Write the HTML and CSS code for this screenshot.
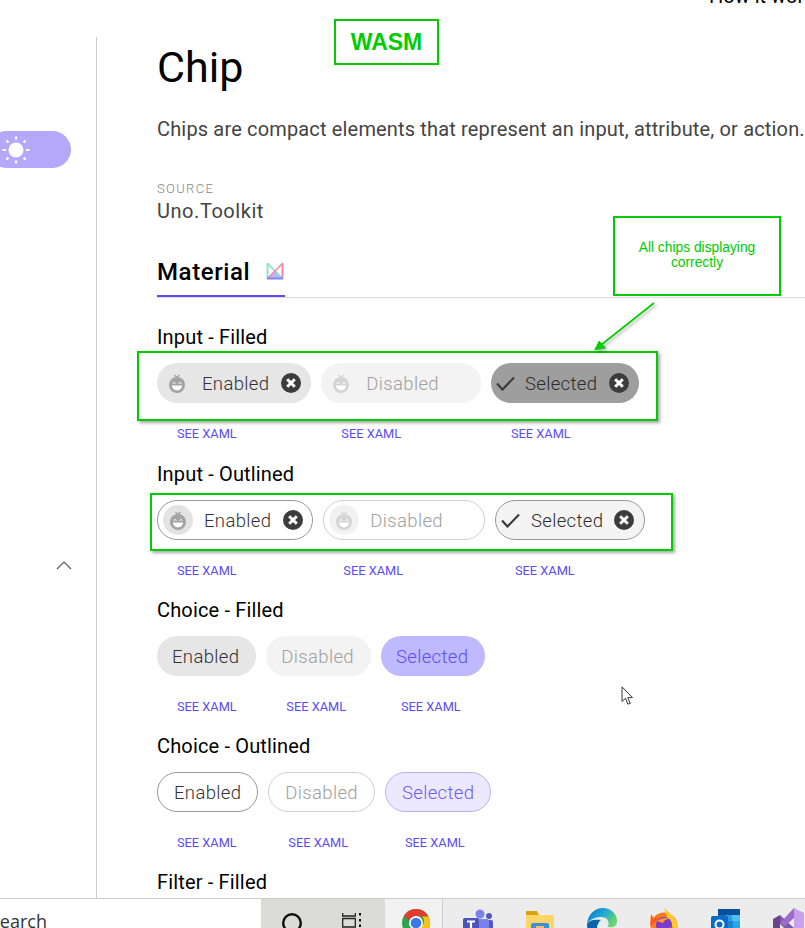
FILE: index.html
```html
<!DOCTYPE html>
<html lang="en">
<head>
<meta charset="utf-8">
<title>Chip</title>
<link rel="stylesheet" href="styles.css">
</head>
<body>
<div class="page">
  <header class="topbar"><span class="topbar-link">How it works</span></header>
  <div class="layout">
    <aside class="sidebar">
      <div class="theme-toggle">
        <svg class="sun" viewBox="0 0 30 30" width="30" height="30"><circle cx="15" cy="15" r="7.500" fill="#fff"/><g stroke="#fff" stroke-width="2.200"><path d="M15 1.500v3M15 25.500v3M1.500 15h3.500M25 15h3.500M5.500 5.500l2 2M22.500 22.500l2 2M5.500 24.500l2-2M22.500 7.500l2-2"/></g></svg>
      </div>
      <svg class="chevron" viewBox="0 0 16 9" width="16" height="9"><path d="M1 8l7-7 7 7" fill="none" stroke="#555" stroke-width="1.100"/></svg>
    </aside>
    <main class="main">
      <h1 class="title">Chip</h1>
      <p class="desc">Chips are compact elements that represent an input, attribute, or action.</p>
      <div class="source-label">SOURCE</div>
      <div class="source-value">Uno.Toolkit</div>
      <div class="tabs">
        <div class="tab">
          <span class="tab-text">Material</span>
          <svg class="tab-icon" viewBox="0 0 18 18" width="18" height="18"><g opacity=".8"><path d="M9 9L16.500 16.500H1.500Z" fill="#a9a4f7"/><path d="M1.500 1V17" stroke="#6fe0b0" stroke-width="2"/><path d="M1.500 1.500L16.500 16.500" stroke="#62d9b5" stroke-width="1.600" fill="none"/><path d="M16.500 1V17" stroke="#f2688f" stroke-width="2"/><path d="M16.500 1.500L1.500 16.500" stroke="#f2688f" stroke-width="1.600" fill="none"/><path d="M1 16.500H17" stroke="#6c63f0" stroke-width="2"/></g></svg>
        </div>
      </div>

      <section class="section">
        <h2 class="heading">Input - Filled</h2>
        <div class="row">
          <div class="cell"><div class="chip input filled"><svg class="face"><use href="#face"/></svg><span class="label">Enabled</span><svg class="close"><use href="#close"/></svg></div><a class="xaml">SEE XAML</a></div>
          <div class="cell"><div class="chip input filled disabled"><svg class="face"><use href="#face"/></svg><span class="label">Disabled</span><span class="close-space"></span></div><a class="xaml">SEE XAML</a></div>
          <div class="cell"><div class="chip input filled selected"><svg class="check"><use href="#check"/></svg><span class="label">Selected</span><svg class="close"><use href="#close"/></svg></div><a class="xaml">SEE XAML</a></div>
        </div>
      </section>

      <section class="section">
        <h2 class="heading">Input - Outlined</h2>
        <div class="row">
          <div class="cell"><div class="chip input outlined"><span class="avatar"><svg class="face"><use href="#face"/></svg></span><span class="label">Enabled</span><svg class="close"><use href="#close"/></svg></div><a class="xaml">SEE XAML</a></div>
          <div class="cell"><div class="chip input outlined disabled"><span class="avatar"><svg class="face"><use href="#face"/></svg></span><span class="label">Disabled</span><span class="close-space"></span></div><a class="xaml">SEE XAML</a></div>
          <div class="cell"><div class="chip input outlined selected"><svg class="check"><use href="#check"/></svg><span class="label">Selected</span><svg class="close"><use href="#close"/></svg></div><a class="xaml">SEE XAML</a></div>
        </div>
      </section>

      <section class="section">
        <h2 class="heading">Choice - Filled</h2>
        <div class="row">
          <div class="cell"><div class="chip choice filled"><span class="label">Enabled</span></div><a class="xaml">SEE XAML</a></div>
          <div class="cell"><div class="chip choice filled disabled"><span class="label">Disabled</span></div><a class="xaml">SEE XAML</a></div>
          <div class="cell"><div class="chip choice filled selected"><span class="label">Selected</span></div><a class="xaml">SEE XAML</a></div>
        </div>
      </section>

      <section class="section">
        <h2 class="heading">Choice - Outlined</h2>
        <div class="row">
          <div class="cell"><div class="chip choice outlined"><span class="label">Enabled</span></div><a class="xaml">SEE XAML</a></div>
          <div class="cell"><div class="chip choice outlined disabled"><span class="label">Disabled</span></div><a class="xaml">SEE XAML</a></div>
          <div class="cell"><div class="chip choice outlined selected"><span class="label">Selected</span></div><a class="xaml">SEE XAML</a></div>
        </div>
      </section>

      <section class="section">
        <h2 class="heading">Filter - Filled</h2>
      </section>
    </main>
  </div>

  <footer class="taskbar">
    <div class="tb-search"><span class="tb-search-text">Search</span></div>
    <div class="tb-tools">
      <svg class="tb-svg" viewBox="0 0 32 32" width="32" height="32"><circle cx="15" cy="15" r="8.800" fill="none" stroke="#111" stroke-width="2.400"/></svg>
      <svg class="tb-svg" viewBox="0 0 32 32" width="32" height="32"><path d="M.700 5V8H13.300V5M.700 10.500H13.300V19H.700z" fill="none" stroke="#222" stroke-width="1.300"/><path d="M18 5v2.500M18 11v2.500M18 16.500v2.500" stroke="#111" stroke-width="2" fill="none"/></svg>
    </div>
    <div class="tb-chrome">
      <svg class="tb-svg" viewBox="0 0 32 32" width="32" height="32"><circle cx="16" cy="15" r="14" fill="#2ea44f"/><path d="M4 8A14 14 0 0 1 28.500 8.500H16A6.500 6.500 0 0 0 9.800 13z" fill="#e33b2e"/><path d="M28.500 8.500A14 14 0 0 1 16 29L22 18A6.500 6.500 0 0 0 22 8.500z" fill="#fbc116"/><circle cx="16" cy="15" r="7" fill="#fff"/><circle cx="16" cy="15" r="5.300" fill="#3b78e7"/></svg>
    </div>
    <div class="tb-apps">
      <svg class="tb-svg" viewBox="0 0 32 32" width="32" height="32"><circle cx="27" cy="8" r="3" fill="#5059c9"/><rect x="22" y="12" width="9" height="14" rx="2" fill="#5059c9"/><circle cx="18" cy="6" r="4.500" fill="#7b83eb"/><rect x="10" y="11" width="17" height="18" rx="2" fill="#7b83eb"/><rect x="1" y="10" width="16" height="16" rx="1.500" fill="#4b53bc"/><path d="M5 13.500h8M9 13.500v9" stroke="#fff" stroke-width="2.200" fill="none"/><circle cx="25" cy="27" r="4.500" fill="#92c353" stroke="#fff"/></svg>
      <svg class="tb-svg" viewBox="0 0 32 32" width="32" height="32"><path d="M2 7V3.500Q2 3 3 3H13L15 7z" fill="#d9a20f"/><rect x="2" y="7" width="28" height="24" rx="1" fill="#fcd667"/><rect x="7" y="15" width="18" height="16" rx="1.500" fill="#3f8fd8"/><rect x="12" y="18" width="8" height="3" fill="#f0c060"/></svg>
      <svg class="tb-svg" viewBox="0 0 32 32" width="32" height="32"><defs><linearGradient id="edge" x1="0" y1="0" x2="1" y2="0.600"><stop offset="0" stop-color="#0d67b5"/><stop offset=".5" stop-color="#1ba6d9"/><stop offset="1" stop-color="#6bd66f"/></linearGradient></defs><path d="M1 16C2 6 9 0 17 0C25 0 31 6 31 13C31 19 26 20 22 19C24 13 21 9 15 9C9 9 3 12 1 16Z" fill="url(#edge)"/><path d="M1 16C1 26 8 32 16 32L22 20C18 22 14 21 13 18C12 15 13 13 15 12C9 11 3 12 1 16Z" fill="#0a63ae"/><circle cx="15.500" cy="19" r="4.500" fill="#e8f2f6"/></svg>
      <svg class="tb-svg" viewBox="0 0 32 32" width="32" height="32"><circle cx="16" cy="18" r="13.500" fill="#ff7a1f"/><path d="M16 0C19 3 24 6 27 11C30 15 30 20 29 24L20 14C19 8 18 5 16 0Z" fill="#ffcb2e"/><path d="M3 6L6 11L10 8L8 13L2 18Z" fill="#ff5a1a"/><circle cx="16" cy="17" r="8" fill="#7a3cc9"/><path d="M9 13Q15 8 22 11Q16 11 15 15Z" fill="#ff9a2a"/><path d="M10 21Q17 26 23 18Q20 27 12 25Z" fill="#ff5d8f"/></svg>
      <svg class="tb-svg" viewBox="0 0 32 32" width="32" height="32"><rect x="8" y="1" width="22" height="6" fill="#0a4f9c"/><rect x="8" y="7" width="22" height="25" fill="#0f6cbd"/><rect x="15" y="7" width="7" height="6" fill="#2a9be0"/><rect x="22" y="7" width="8" height="6" fill="#50bdf0"/><rect x="15" y="13" width="8" height="7" fill="#1c86d6"/><rect x="23" y="13" width="7" height="7" fill="#2aa5e8"/><rect x="1" y="8" width="17" height="17" rx="1.500" fill="#0a6cc4"/><circle cx="9.500" cy="16.500" r="4" fill="none" stroke="#fff" stroke-width="2"/></svg>
      <svg class="tb-svg" viewBox="0 0 32 32" width="32" height="32"><path d="M1 11L8 7V28L1 24Z" fill="#68478f"/><path d="M8 7L22 20L22 30L8 16Z" fill="#7e58a9"/><path d="M22 0L32 5V28L22 32Z" fill="#c8a0ec"/><path d="M22 0V10L12 19L8 15Z" fill="#9a6dcb"/></svg>
    </div>
  </footer>

  <div class="note-box wasm">WASM</div>
  <div class="note-box note">All chips displaying<br>correctly</div>
  <div class="note-box frame frame-filled"></div>
  <div class="note-box frame frame-outlined"></div>
  <svg class="arrow" viewBox="0 0 66 52" width="66" height="52"><path d="M61 2L8 44" stroke="#00cc00" stroke-width="1.600" fill="none"/><path d="M1 49.500L6 39.500L13 47Z" fill="#00cc00"/></svg>
  <svg class="cursor" viewBox="0 0 14 22" width="13" height="20"><path d="M1 1V17L4.800 13.500L7.500 20L10 19L7.300 12.800H12.500Z" fill="#fff" stroke="#222" stroke-width="1"/></svg>
</div>

<svg class="defs" width="0" height="0">
  <defs>
    <symbol id="face" viewBox="0 0 16 20"><path d="M5.500 2L8 4.500L10.500 2" fill="none" stroke="currentColor" stroke-width="1.300"/><circle cx="8" cy="12" r="8" fill="currentColor"/><path d="M3.500 10.500Q5 8.500 6.500 10.500M9.500 10.500Q11 8.500 12.500 10.500" fill="none" stroke="#fff" stroke-width="1"/><path d="M3 12.500H13A5 5 0 0 1 3 12.500Z" fill="#fff"/></symbol>
    <symbol id="close" viewBox="0 0 20 20"><circle cx="10" cy="10" r="10" fill="#3c3c3c"/><path d="M6.200 6.200L13.800 13.800M13.800 6.200L6.200 13.800" stroke="#fff" stroke-width="3" fill="none"/></symbol>
    <symbol id="check" viewBox="0 0 19 15"><path d="M1 7.500L6.500 13.500L18 1.500" fill="none" stroke="#3c3c3c" stroke-width="2.200"/></symbol>
  </defs>
</svg>
</body>
</html>
```
FILE: styles.css
```css
* { box-sizing: border-box; }
html, body { margin: 0; padding: 0; }
body { background: #fff; font-family: Roboto, "Liberation Sans", sans-serif; color: #000; }
.page { position: relative; width: 805px; height: 928px; overflow: hidden; display: flex; flex-direction: column; }
.defs { position: absolute; }

.topbar { height: 37px; flex: none; padding-left: 709px; display: flex; align-items: flex-start; overflow: hidden; }
.topbar-link { font-size: 20px; line-height: 18px; margin-top: -13px; white-space: nowrap; color: #000; }

.layout { flex: 1; min-height: 0; display: flex; overflow: hidden; }
.sidebar { width: 97px; flex: none; border-right: 1px solid #ccc; padding-top: 94px; }
.theme-toggle { width: 83px; height: 37px; margin-left: -12px; border-radius: 18.500px; background: #b5a8fb; display: flex; align-items: center; padding-left: 13px; }
.sun { display: block; }
.chevron { display: block; margin: 393px 0 0 56px; }

.main { flex: 1; min-width: 0; padding: 5px 0 0 60px; }
.title { margin: 0; font-size: 43px; line-height: 50px; font-weight: 400; color: #000; }
.desc { margin: 25px 0 0; font-size: 20px; line-height: 24px; letter-spacing: .16px; color: #444; white-space: nowrap; }
.source-label { margin-top: 40px; font-size: 13px; line-height: 16px; letter-spacing: 1.350px; font-weight: 300; color: #888; }
.source-value { margin-top: 2px; font-size: 20px; line-height: 24px; letter-spacing: .55px; color: #444; }
.tabs { margin-top: 34px; border-bottom: 1px solid #ddd; }
.tab { display: inline-flex; align-items: center; gap: 16px; width: 128px; height: 40px; padding-bottom: 8px; border-bottom: 2px solid #5b4cf5; }
.tab-text { font-size: 24px; line-height: 30px; font-weight: 500; letter-spacing: .6px; color: #000; }
.tab-icon { display: block; margin-bottom: 2px; flex: none; }

.section { margin-bottom: 16px; }
.section:first-of-type { margin-top: 27px; margin-bottom: 17px; }
.heading { margin: 0 0 14px; font-size: 20px; line-height: 24px; font-weight: 400; letter-spacing: .16px; color: #000; }
.row { display: flex; gap: 10px; }
.cell { display: flex; flex-direction: column; align-items: flex-start; }
.xaml { margin: 20px 0 0 20px; font-size: 12.800px; line-height: 22px; font-weight: 400; color: #5b4cf5; white-space: nowrap; }

.chip { height: 40px; border-radius: 20px; display: flex; align-items: center; font-size: 18.500px; font-weight: 300; letter-spacing: .35px; color: #333; white-space: nowrap; border: 1px solid transparent; }
.label { position: relative; top: 1px; }
.chip.filled { background: #e6e6e6; border: 0; }
.chip.filled.disabled { background: #f3f3f3; color: #a0a0a0; }
.chip.outlined { background: #fff; border-color: #999; }
.chip.outlined.disabled { border-color: #d0d0d0; color: #a0a0a0; }

.chip.input.filled { padding: 0 10px 0 12px; }
.chip.input.filled .face { margin-right: 17px; }
.chip.input.outlined { padding: 0 9px 0 5px; }
.chip.input .label { margin-right: 12px; }
.chip.input.filled.selected { background: #9e9e9e; color: #2c2c2c; padding-left: 5px; }
.chip.input.outlined.selected { background: #f4f4f4; color: #2c2c2c; padding: 0 10px 0 5px; }
.chip.input.selected .check { margin-right: 10px; }
.chip.input.outlined.selected .check { margin-right: 11px; }
.chip.input.outlined.selected .label { margin-right: 11px; }

.face { display: block; width: 16px; height: 20px; flex: none; color: #a3a3a3; }
.disabled .face { color: #d4d4d4; }
.avatar { width: 30px; height: 30px; border-radius: 50%; background: #e3e3e3; display: flex; align-items: center; justify-content: center; margin-right: 11px; flex: none; }
.disabled .avatar { background: #f1f1f1; }
.close { display: block; width: 20px; height: 20px; flex: none; margin-top: -1px; }
.close-space { display: block; width: 20px; height: 20px; flex: none; }
.check { display: block; width: 19px; height: 15px; flex: none; }

.chip.choice.filled { padding: 0 17px 0 15px; }
.chip.choice.outlined { padding: 0 16px; }
.chip.choice.selected { color: #5b4cf5; }
.chip.choice.filled.selected { background: #bfbaff; }
.chip.choice.outlined.selected { background: #ece9fe; border-color: #b9b0fb; color: #6a5cf5; }

.taskbar { height: 30px; flex: none; display: flex; border-top: 1px solid #ccc; overflow: hidden; }
.tb-svg { display: block; flex: none; }
.tb-search { width: 261px; flex: none; background: #fff; overflow: hidden; }
.tb-search-text { display: block; margin: 12px 0 0 -10px; font-family: "Open Sans", sans-serif; font-size: 18px; line-height: 20px; color: #333; }
.tb-tools { width: 124px; flex: none; background: #dbdbd9; display: flex; gap: 33px; padding: 9px 0 0 16px; }
.tb-chrome { width: 58px; flex: none; background: #f1f1f1; border-right: 1px solid #ccc; padding: 9px 0 0 15px; }
.tb-apps { flex: 1; min-width: 0; background: #ececec; display: flex; gap: 30px; padding: 9px 0 0 19px; }

.note-box { position: absolute; border: 2px solid #00cc00; background: #fff; color: #00cc00; font-family: "Liberation Sans", Arial, sans-serif; }
.wasm { left: 334px; top: 19px; width: 105px; height: 46px; font-size: 23px; font-weight: 700; display: flex; align-items: center; justify-content: center; }
.note { left: 613px; top: 216px; width: 168px; height: 80px; font-size: 13.800px; line-height: 15px; display: flex; align-items: center; justify-content: center; text-align: center; padding-bottom: 3px; }
.frame { background: transparent; box-shadow: 2px 2px 3px rgba(0, 0, 0, .35); }
.frame-filled { left: 137px; top: 351px; width: 521px; height: 70px; }
.frame-outlined { left: 150px; top: 493px; width: 523px; height: 58px; }
.arrow { position: absolute; left: 593px; top: 301px; filter: drop-shadow(2px 2px 1.500px rgba(0, 0, 0, .3)); }
.cursor { position: absolute; left: 621px; top: 686px; }
```
